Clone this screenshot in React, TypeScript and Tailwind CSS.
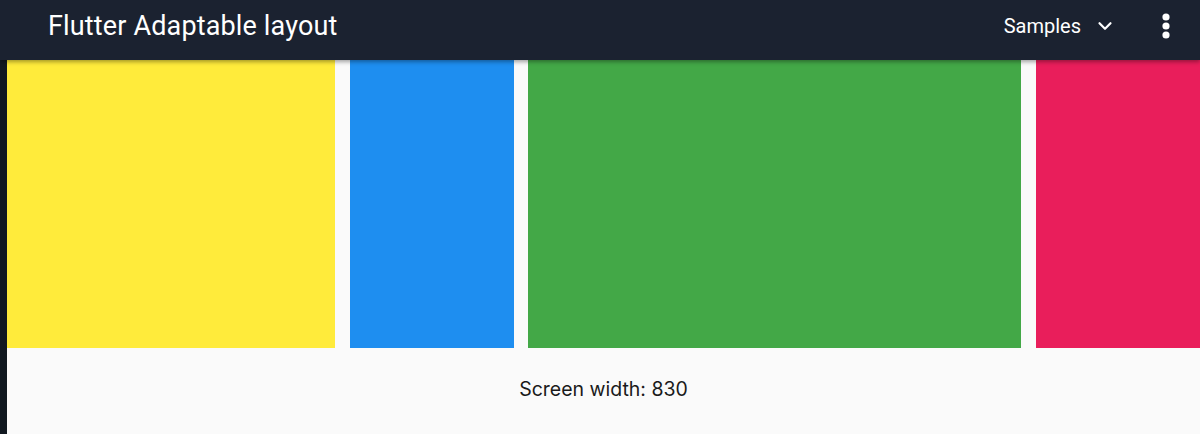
import {ChevronDown} from "lucide-react";

const boxes = [
  {color: "bg-[#ffeb3b]", width: "w-[328px]"},
  {color: "bg-[#1e8ef0]", width: "w-[164px]"},
  {color: "bg-[#43a847]", width: "w-[493px]"},
  {color: "bg-[#e91e5b]", width: "w-[200px]"},
];

const App = () => {
  return (
    <div className="w-[1200px] h-[434px] flex flex-col overflow-hidden bg-[#fafafa] font-['Roboto',sans-serif]">
      {/* App bar */}
      <header className="relative z-10 h-[60px] shrink-0 flex items-center pb-[8px] bg-[#1b2230] text-white shadow-[0_2px_4px_rgba(0,0,0,0.35)]">
        <h1 className="pl-[48px] text-[27px] leading-none tracking-[0.15px]">
          Flutter Adaptable layout
        </h1>
        <div className="ml-auto flex items-center">
          <button type="button" className="flex items-center gap-[13px] text-[20px] leading-none">
            Samples
            <ChevronDown size={22} strokeWidth={2.4} />
          </button>
          <button type="button" className="ml-[45px] mr-[29px] flex items-center">
            <svg width="10" height="28" viewBox="0 0 10 28" fill="white">
              <circle cx="5" cy="5" r="3.6" />
              <circle cx="5" cy="14" r="3.6" />
              <circle cx="5" cy="23" r="3.6" />
            </svg>
          </button>
        </div>
      </header>

      <div className="flex flex-1 min-h-0">
        {/* Left edge strip */}
        <div className="w-[7px] shrink-0 bg-[#111820]" />

        <main className="flex-1 min-w-0 flex flex-col overflow-hidden">
          <div className="h-[288px] shrink-0 flex gap-[14.5px]">
            {boxes.map((b, i) => (
              <div key={i} className={`${b.color} ${b.width} shrink-0 h-full`} />
            ))}
          </div>
          <div className="flex-1 flex items-center justify-center pb-[3px]">
            <p className="text-[19.5px] text-[#1a1a1a] font-['Inter',sans-serif]">
              Screen width: 830
            </p>
          </div>
        </main>
      </div>
    </div>
  );
};

export default App;
